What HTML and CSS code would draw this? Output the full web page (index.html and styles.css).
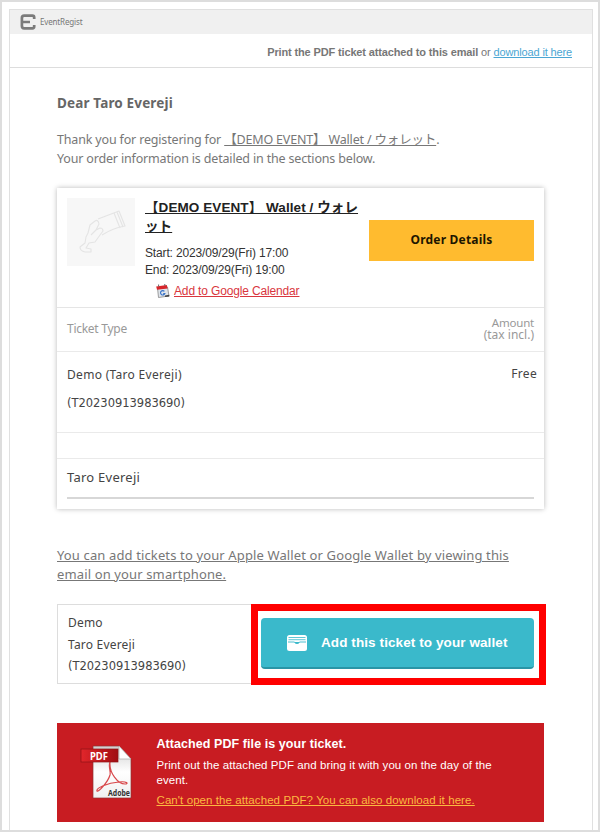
FILE: index.html
```html
<!DOCTYPE html>
<html lang="en">
<head>
<meta charset="utf-8">
<title>EventRegist ticket email</title>
<link rel="stylesheet" href="styles.css">
</head>
<body>
<div class="frame">
<div class="mail">
  <header class="brand">
    <svg class="brand-mark" viewBox="0 0 16 16" width="16" height="16"><path d="M14.2 5V3.5Q14.2 1.7 12.4 1.7H4.2Q1.9 1.7 1.9 4V12Q1.9 14.3 4.2 14.3H12.4Q14.2 14.3 14.2 12.5V11M1.9 8H10" fill="none" stroke="#7b7b7b" stroke-width="2.7"/></svg>
    <span class="brand-name">EventRegist</span>
  </header>
  <div class="notice"><b>Print the PDF ticket attached to this email</b> or <a href="#">download it here</a></div>
  <main class="content">
    <h1 class="greeting">Dear Taro Evereji</h1>
    <p class="intro">Thank you for registering for <a href="#">【DEMO EVENT】 Wallet / ウォレット</a>.<br>Your order information is detailed in the sections below.</p>

    <section class="card">
      <div class="event">
        <svg class="thumb" viewBox="0 0 68 68" width="68" height="68"><rect width="68" height="68" fill="#f7f7f7"/><g fill="none" stroke="#e4e4e4" stroke-width="1.1" stroke-linejoin="round"><path d="M31 21L52 13L58 28Q46 30 35 37M47 15L53 30M50 14L56 29"/><path d="M33 37L36 33Q36 30 33 30L29 32L32 26Q31 21 28 23L23 27L21 35L19 39L18 45L13 49Q13 53 18 54L24 54L24 51L19 50L22 45L28 44L33 37M24 37L29 32"/></g></svg>
        <div class="event-info">
          <h2 class="event-title"><a href="#">【DEMO EVENT】 Wallet / ウォレット</a></h2>
          <div class="when">Start: 2023/09/29(Fri) 17:00</div>
          <div class="when">End: 2023/09/29(Fri) 19:00</div>
          <div class="calendar">
            <svg viewBox="0 0 16 16" width="16" height="16"><path d="M2.5 5L12.5 4L14 13L3.5 14.5Z" fill="#dfe4ea" stroke="#888" stroke-width=".8"/><path d="M1.2 3.6L11.8 2L12.6 5.5L2 6.7Z" fill="#d8262b"/><path d="M3.6 1.5V3.6M9.8 1V2.8" stroke="#666"/><path d="M9.4 8.3A2.2 2.2 0 1 0 9.8 10.6H8.2" fill="none" stroke="#3974c9" stroke-width="1.2"/><path d="M10 13.2L14.3 12.6" stroke="#444" stroke-width="1.6"/></svg>
            <a href="#">Add to Google Calendar</a>
          </div>
        </div>
        <a class="order-button" href="#">Order Details</a>
      </div>
      <div class="row head"><span class="type">Ticket Type</span><div class="amount"><div class="amount-label">Amount</div><div>(tax incl.)</div></div></div>
      <div class="row item"><div class="ticket">Demo (Taro Evereji)<br><span class="code">(T20230913983690)</span></div><span class="price">Free</span></div>
      <div class="row blank"></div>
      <div class="owner">Taro Evereji</div>
    </section>

    <p class="hint">You can add tickets to your Apple Wallet or Google Wallet by viewing this<br>email on your smartphone.</p>

    <section class="wallet">
      <div class="wallet-info">Demo<br>Taro Evereji<br><span class="code">(T20230913983690)</span></div>
      <div class="highlight">
        <a class="wallet-button" href="#">
          <svg viewBox="0 0 20 16" width="20" height="16"><rect width="20" height="16" rx="2.5" fill="#fff"/><path d="M1.5 2.5H18.5M1.5 4.7H18.5" stroke="#3ab9cb" stroke-width=".8"/><path d="M1 7H7.5Q8 8.6 10 8.6T12.5 7H19" fill="#3ab9cb" stroke="#3ab9cb" stroke-width=".9"/></svg>
          <span>Add this ticket to your wallet</span>
        </a>
      </div>
    </section>

    <section class="pdf">
      <svg class="pdf-icon" viewBox="0 0 54 56" width="54" height="56">
        <defs><linearGradient id="page" x2="0" y2="1"><stop stop-color="#cfcfcf"/><stop offset=".5" stop-color="#fff"/><stop offset="1" stop-color="#f0f0f0"/></linearGradient><linearGradient id="tag" x2="1"><stop stop-color="#e2262b"/><stop offset="1" stop-color="#a00d12"/></linearGradient></defs>
        <path d="M13 1H39L51 14V53H13Z" fill="url(#page)" stroke="#8d3030" stroke-width=".7"/><path d="M39 1V14H51Z" fill="#fff" stroke="#aaa" stroke-width=".7"/>
        <path d="M30 17C28 21 31 26 30 30C28 37 18 48 17 46C16 43 27 38 39 37C47 36 49 39 45 39C38 39 29 28 30 17Z" fill="none" stroke="#d8484b" stroke-width="1.2"/>
        <rect x="1" y="4" width="37" height="13" fill="url(#tag)" stroke="#8c1216" stroke-width=".7"/>
        <text class="tag-text" x="10" y="14.5" textLength="18" lengthAdjust="spacingAndGlyphs">PDF</text>
        <text class="adobe" x="28" y="51" textLength="22" lengthAdjust="spacingAndGlyphs">Adobe</text>
      </svg>
      <div class="pdf-text">
        <h3>Attached PDF file is your ticket.</h3>
        <p>Print out the attached PDF and bring it with you on the day of the event.</p>
        <a href="#">Can't open the attached PDF? You can also download it here.</a>
      </div>
    </section>
  </main>
</div>
</div>
</body>
</html>
```

FILE: styles.css
```css
* { box-sizing: border-box; }
body { margin: 0; background: #fff; color: #444; font-family: "Noto Sans", "Noto Sans CJK JP", sans-serif; }
h1, h2, h3, p { margin: 0; }
svg { flex: none; display: block; overflow: visible; }
.frame { height: 832px; border: 2px solid #ddd; padding: 7px 5px 0 7px; overflow: hidden; }
.mail { height: 821px; border: 1px solid #e0e0e0; border-bottom: 0; }
.brand { height: 24px; background: #f0f0f0; display: flex; align-items: center; padding-left: 10px; gap: 4px; }
.brand-name { font: 8px/12px "Noto Sans", sans-serif; letter-spacing: -.15px; color: #777; }
.notice { height: 34px; border-bottom: 1px solid #ddd; padding-right: 20px; text-align: right; font: 11px/37px "Liberation Sans", sans-serif; letter-spacing: -.14px; color: #777; white-space: nowrap; }
.notice a { color: #4ba6d3; }
.content { padding: 0 48px 0 47px; }
.greeting { padding-top: 26px; font-size: 13.5px; line-height: 19px; letter-spacing: .15px; color: #666; }
.intro { margin-top: 17px; font-size: 12.5px; line-height: 19px; letter-spacing: -.17px; color: #777; white-space: nowrap; }
.intro a { color: #777; }
.card { margin-top: 20px; height: 321px; background: #fff; box-shadow: 0 0 5px rgba(0,0,0,.28); }
.event { height: 120px; display: flex; padding: 10px 10px 0; border-bottom: 1px solid #e5e5e5; }
.event-info { width: 214px; margin-left: 10px; margin-right: 10px; font-family: "Liberation Sans", "Noto Sans CJK JP", sans-serif; }
.event-title { font-size: 13.5px; line-height: 19px; letter-spacing: .08px; }
.event-title a { color: #222; }
.when { font-size: 12px; line-height: 17px; letter-spacing: -.15px; color: #333; }
.event-title + .when { margin-top: 9px; }
.calendar { display: flex; padding-left: 10px; gap: 3px; font-size: 12px; line-height: 16px; letter-spacing: -.15px; margin-top: 4px; }
.calendar a { color: #d9363e; }
.order-button { width: 165px; height: 41px; margin-top: 22px; background: #ffbb2f; color: #1d1600; font-size: 12px; font-weight: 700; line-height: 40px; letter-spacing: .2px; text-align: center; text-decoration: none; }
.row { display: flex; justify-content: space-between; border-bottom: 1px solid #eaeaea; padding: 0 10px; }
.head { height: 44px; font-size: 12px; color: #999; }
.head .type { line-height: 42px; letter-spacing: -.27px; }
.amount { padding-top: 9px; line-height: 12px; text-align: right; }
.amount-label { font-size: 11.5px; letter-spacing: -.2px; }
.item { height: 81px; padding-right: 7px; font-size: 12px; line-height: 28px; letter-spacing: .3px; }
.ticket { padding-top: 9px; }
.price { padding-top: 8px; }
.code { font-family: "DejaVu Sans", sans-serif; font-size: 11.5px; letter-spacing: -.02px; }
.blank { height: 26px; }
.owner { margin: 0 10px; height: 40px; border-bottom: 2px solid #d7d7d7; font-size: 13px; line-height: 37px; letter-spacing: .25px; }
.hint { margin-top: 37px; font-size: 13px; line-height: 19px; letter-spacing: .13px; color: #777; text-decoration: underline; white-space: nowrap; }
.wallet { display: flex; height: 80px; margin-top: 20px; border: 1px solid #ddd; border-right: 0; }
.wallet-info { width: 193px; padding: 7px 0 0 10px; font-size: 12px; line-height: 21.5px; letter-spacing: .2px; }
.highlight { width: 295px; height: 81px; margin: -1px -2px 0 0; flex: none; border: 7px solid #f00; background: #fff; padding: 7px 5px 0 3px; }
.wallet-button { display: flex; align-items: center; height: 51px; border-radius: 4px; background: #3ab9cb; border-bottom: 2px solid #2995a6; padding-left: 26px; gap: 14px; color: #fff; font: bold 13.5px "Liberation Sans", sans-serif; letter-spacing: .09px; text-decoration: none; white-space: nowrap; }
.pdf { display: flex; height: 99px; margin-top: 39px; background: #c81c22; color: #fff; font-family: "Liberation Sans", sans-serif; }
.pdf-icon { margin: 22px 0 0 23px; }
.tag-text { font: bold 10px "Noto Sans", sans-serif; fill: #fff; }
.adobe { font: bold 9px "Noto Sans", sans-serif; fill: #333; }
.pdf-text { margin-left: 22.5px; padding-top: 13px; width: 350px; }
.pdf-text h3 { font-size: 12.5px; line-height: 17px; letter-spacing: .07px; }
.pdf-text p { margin-top: 5px; font-size: 11.5px; line-height: 15px; letter-spacing: .08px; }
.pdf-text a { display: block; margin-top: 5px; font-size: 11.5px; line-height: 15px; letter-spacing: .08px; color: #fcb940; white-space: nowrap; }
```
